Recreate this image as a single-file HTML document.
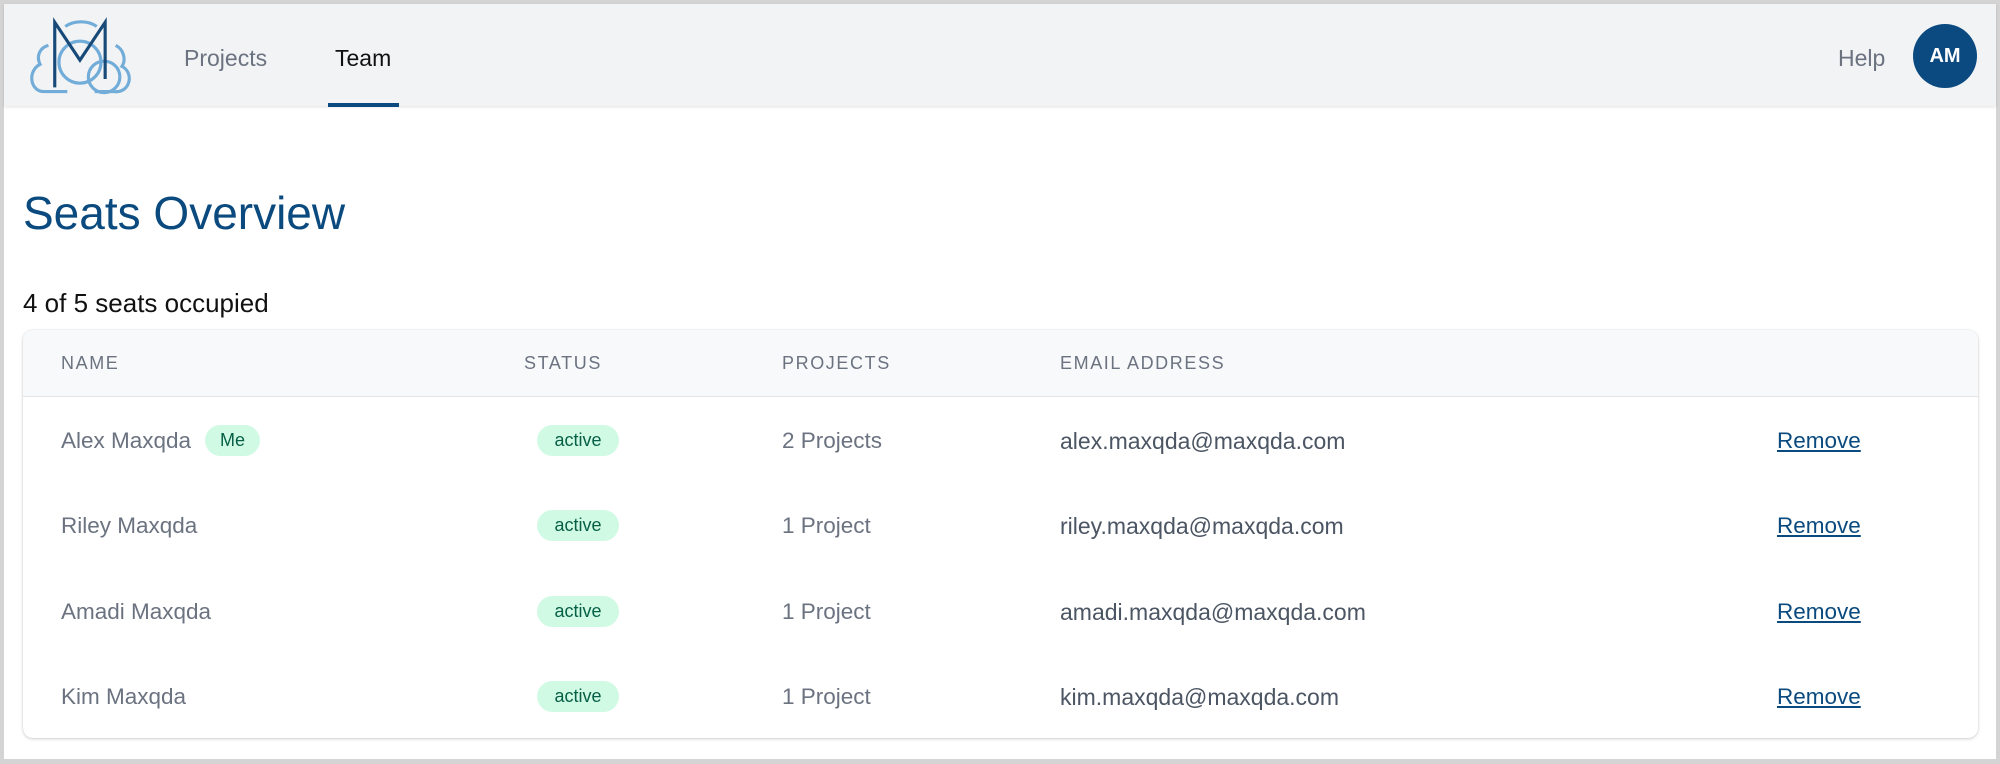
<!DOCTYPE html>
<html><head><meta charset="utf-8"><style>
*{box-sizing:border-box;margin:0;padding:0}
html,body{width:2000px;height:764px;overflow:hidden}
body{background:#d4d4d4;font-family:"Liberation Sans",sans-serif;position:relative}
.page{position:absolute;left:4px;top:4px;width:1992px;height:755px;background:#fff}
.hdr{position:absolute;left:0;top:0;width:1992px;height:102px;background:#f2f3f5;box-shadow:0 1px 3px rgba(0,0,0,.12)}
.nav{position:absolute;top:41px;font-size:23px;color:#6b7280}
.abs{position:absolute}
.avatar{position:absolute;left:1909px;top:20px;width:64px;height:64px;border-radius:50%;background:#0a4a80;color:#fff;font-weight:bold;font-size:20px;text-align:center;line-height:64px}
h1{position:absolute;left:19px;top:182px;font-size:46px;font-weight:normal;color:#0b4a7e}
.sub{position:absolute;left:19px;top:284px;font-size:26px;color:#111}
.card{position:absolute;left:19px;top:326px;width:1955px;height:408px;border-radius:10px;background:#fff;box-shadow:0 1px 3px rgba(0,0,0,.18),0 0 1px rgba(0,0,0,.15);overflow:hidden}
.th{position:absolute;left:0;top:0;width:100%;height:67px;background:#f8f9fb;border-bottom:1px solid #e3e5e9}
.th span{position:absolute;top:23px;font-size:18px;letter-spacing:1.6px;color:#6b7280}
.row{position:absolute;left:0;width:100%;height:85px}
.row span{position:absolute;top:31px;font-size:22.5px;color:#6b7280}
.row .em{color:#4b5563;font-size:23px}
.badge{position:absolute;top:28px;height:31px;border-radius:16px;background:#d1fae5;color:#065f46;font-size:18px;text-align:center;line-height:31px}
.rm{color:#0b4a7e!important;text-decoration:underline}
</style></head><body><div class="page">
<div class="hdr">
<svg class="abs" style="left:20px;top:12px" width="114" height="84" viewBox="0 0 106 80">
<g fill="none" stroke="#72acd8" stroke-width="3">
<path d="M40 72 H18 C4 72 2 52 14 46 C10 38 14 30 22 28"/>
<path d="M38 10 C46 4 60 4 68 10"/>
<path d="M86 28 C94 32 96 42 92 48 C104 54 100 74 84 72 H66"/>
<circle cx="52" cy="44" r="20"/>
<circle cx="75" cy="58" r="15"/>
</g>
<path d="M28 68 V6 L52 42 L76 6 V60" fill="none" stroke="#174a78" stroke-width="3"/>
</svg>
<div class="nav" style="left:180px">Projects</div>
<div class="nav" style="left:331px;color:#111">Team</div>
<div class="abs" style="left:324px;top:99px;width:71px;height:4px;background:#0b4a80"></div>
<div class="nav" style="left:1834px">Help</div>
<div class="avatar">AM</div>
</div>
<h1>Seats Overview</h1>
<div class="sub">4 of 5 seats occupied</div>
<div class="card">
<div class="th"><span style="left:38px">NAME</span><span style="left:501px">STATUS</span><span style="left:759px">PROJECTS</span><span style="left:1037px">EMAIL ADDRESS</span></div>
<div class="row" style="top:67px"><span style="left:38px">Alex Maxqda</span><div class="badge" style="left:182px;width:55px">Me</div><div class="badge" style="left:514px;width:82px">active</div><span style="left:759px">2 Projects</span><span class="em" style="left:1037px">alex.maxqda@maxqda.com</span><span class="rm" style="left:1754px">Remove</span></div>
<div class="row" style="top:152px"><span style="left:38px">Riley Maxqda</span><div class="badge" style="left:514px;width:82px">active</div><span style="left:759px">1 Project</span><span class="em" style="left:1037px">riley.maxqda@maxqda.com</span><span class="rm" style="left:1754px">Remove</span></div>
<div class="row" style="top:238px"><span style="left:38px">Amadi Maxqda</span><div class="badge" style="left:514px;width:82px">active</div><span style="left:759px">1 Project</span><span class="em" style="left:1037px">amadi.maxqda@maxqda.com</span><span class="rm" style="left:1754px">Remove</span></div>
<div class="row" style="top:323px"><span style="left:38px">Kim Maxqda</span><div class="badge" style="left:514px;width:82px">active</div><span style="left:759px">1 Project</span><span class="em" style="left:1037px">kim.maxqda@maxqda.com</span><span class="rm" style="left:1754px">Remove</span></div>
</div>
</div></body></html>
